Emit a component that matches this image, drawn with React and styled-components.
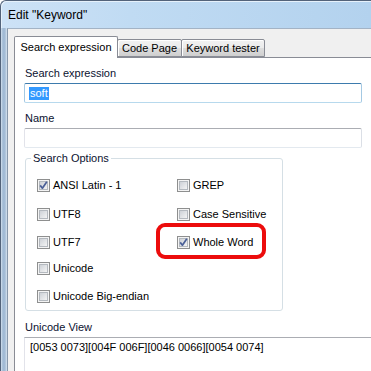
import React from "react";
import styled, { createGlobalStyle } from "styled-components";

const Global = createGlobalStyle`
  html, body { margin: 0; padding: 0; background: #fff; overflow: hidden; }
  body { font-family: "Liberation Sans", Arial, sans-serif; -webkit-font-smoothing: antialiased; }
`;

const Window = styled.div`
  width: 371px;
  height: 371px;
  display: flex;
  flex-direction: column;
  overflow: hidden;
  background: #fff;
`;

const TitleBar = styled.div`
  flex: none;
  height: 28px;
  box-sizing: border-box;
  border-top: 1px solid #53637a;
  border-left: 1px solid #53637a;
  border-top-left-radius: 6px;
  background: linear-gradient(to right, #cde2f6 0%, #c0dbf3 35%, #b3d2ee 100%);
  box-shadow: inset 1px 1px 0 #e6f1fb;
  display: flex;
  align-items: center;
  padding-left: 7px;
  font-size: 12px;
  color: #000;
`;

const Body = styled.div`
  flex: 1;
  display: flex;
  min-height: 0;
`;

const Frame = styled.div`
  flex: none;
  width: 7px;
  box-sizing: border-box;
  border-left: 1px solid #53637a;
  background: linear-gradient(
    to right,
    #dbe7f3 0px,
    #b0c6dc 1px,
    #9cb6d2 3px,
    #b8cce0 5px,
    #dde8f3 6px
  );
`;

const Client = styled.div`
  flex: 1;
  display: flex;
  flex-direction: column;
  background: #f0f0f0;
  border-left: 1px solid #8797aa;
  border-top: 1px solid #a3b3c5;
  padding: 7px 0 0 6px;
  min-width: 0;
`;

const TabStrip = styled.div`
  flex: none;
  height: 21px;
  display: flex;
  align-items: flex-end;
  position: relative;
  z-index: 1;
`;

const Tab = styled.div`
  box-sizing: border-box;
  width: ${(p) => p.$w}px;
  height: ${(p) => (p.$active ? 22 : 18)}px;
  margin-bottom: ${(p) => (p.$active ? -1 : 0)}px;
  margin-left: ${(p) => (p.$first ? 0 : -1)}px;
  border: 1px solid #898c95;
  border-bottom: ${(p) => (p.$active ? "none" : "1px solid #898c95")};
  border-radius: 2px 2px 0 0;
  background: ${(p) =>
    p.$active ? "#fff" : "linear-gradient(to bottom, #f2f2f2 0%, #ebebeb 50%, #dddddd 51%, #cfcfcf 100%)"};
  box-shadow: ${(p) => (p.$active ? "none" : "inset 1px 1px 0 #fff")};
  position: relative;
  z-index: ${(p) => (p.$active ? 2 : 1)};
  font-size: 11px;
  line-height: 13px;
  color: #000;
  display: flex;
  justify-content: center;
  padding-top: ${(p) => (p.$active ? 4 : 2)}px;
`;

const Panel = styled.div`
  flex: 1;
  background: #fff;
  border-top: 1px solid #898c95;
  border-left: 1px solid #898c95;
  padding: 9px 0 0 9px;
  display: flex;
  flex-direction: column;
  align-items: flex-start;
  min-width: 0;
`;

const Label = styled.div`
  font-size: 11px;
  line-height: 13px;
  color: #0b1230;
  padding-left: 1px;
  margin-top: ${(p) => p.$mt || 0}px;
`;

const TextBox = styled.div`
  box-sizing: border-box;
  width: 338px;
  height: 20px;
  margin-top: 3px;
  border: 1px solid;
  border-radius: 2px;
  border-color: ${(p) =>
    p.$focused ? "#3d7bad #a4c9e3 #b7d9ed #a4c9e3" : "#abadb3 #dbdfe6 #e3e9ef #e2e3ea"};
  background: #fff;
  padding: 3px 0 0 4px;
  font-size: 11px;
  line-height: 13px;
`;

const Selected = styled.span`
  background: #3399ff;
  color: #fff;
  padding: 0 1px;
  display: inline-block;
  height: 13px;
`;

const Group = styled.fieldset`
  margin: 4px 0 0 1px;
  width: 258px;
  box-sizing: border-box;
  border: 1px solid #d5dfe5;
  border-radius: 3px;
  padding: 14px 0 7px 11px;
  min-width: 0;
`;

const Legend = styled.legend`
  font-size: 11px;
  line-height: 13px;
  color: #0b1230;
  padding: 0 2px;
  margin-left: -6px;
`;

const OptionGrid = styled.div`
  display: grid;
  grid-template-columns: 140px auto;
  grid-template-rows: 29px 28px 26px 28px 13px;
  grid-auto-flow: column;
`;

const Option = styled.div`
  display: flex;
  align-items: flex-start;
  gap: 3px;
  height: 13px;
  font-size: 11px;
  line-height: 13px;
  color: #000;
  position: relative;
  white-space: nowrap;
  grid-row: ${(p) => p.$row || "auto"};
  grid-column: ${(p) => p.$col || "auto"};

  ${(p) =>
    p.$highlight &&
    `
    &::after {
      content: "";
      position: absolute;
      left: -21px;
      top: -13px;
      width: 110px;
      height: 36px;
      box-sizing: border-box;
      border: 4px solid #ec0c0c;
      border-radius: 9px;
    }
  `}
`;

const ViewBox = styled.div`
  box-sizing: border-box;
  align-self: stretch;
  flex: 1;
  margin-top: 3px;
  border-top: 1px solid #abadb3;
  border-left: 1px solid #e2e3ea;
  padding: 3px 0 0 5px;
  font-size: 11px;
  line-height: 13px;
  color: #000;
  white-space: nowrap;
`;

function CheckBox({ checked }) {
  return (
    <svg width="13" height="13" viewBox="0 0 13 13" style={{ flex: "none" }}>
      <defs>
        <linearGradient id="cbfill" x1="0" y1="0" x2="1" y2="1">
          <stop offset="0" stopColor="#cbcfd5" />
          <stop offset="1" stopColor="#f6f6f6" />
        </linearGradient>
      </defs>
      <rect x="0.5" y="0.5" width="12" height="12" fill="#f4f4f4" stroke="#8e8f8f" />
      <rect x="2.5" y="2.5" width="8" height="8" fill="url(#cbfill)" stroke="#b4b9bf" />
      {checked && (
        <path
          d="M3.2 6.4 L5.4 9.2 L9.8 2.8"
          stroke="#4a5f97"
          strokeWidth="1.7"
          fill="none"
          strokeLinejoin="round"
        />
      )}
    </svg>
  );
}

const left = [
  { label: "ANSI Latin - 1", checked: true },
  { label: "UTF8" },
  { label: "UTF7" },
  { label: "Unicode" },
  { label: "Unicode Big-endian" },
];
const right = [
  { label: "GREP" },
  { label: "Case Sensitive" },
  { label: "Whole Word", checked: true, highlight: true },
];

export default function App() {
  return (
    <>
      <Global />
      <Window>
        <TitleBar>Edit "Keyword"</TitleBar>
        <Body>
          <Frame />
          <Client>
            <TabStrip>
              <Tab $active $first $w={104}>Search expression</Tab>
              <Tab $w={65}>Code Page</Tab>
              <Tab $w={84}>Keyword tester</Tab>
            </TabStrip>
            <Panel>
              <Label>Search expression</Label>
              <TextBox $focused>
                <Selected>soft</Selected>
              </TextBox>
              <Label $mt={9}>Name</Label>
              <TextBox />
              <Group>
                <Legend>Search Options</Legend>
                <OptionGrid>
                  {left.map((o, i) => (
                    <Option key={o.label} $col={1} $row={i + 1}>
                      <CheckBox checked={o.checked} />
                      {o.label}
                    </Option>
                  ))}
                  {right.map((o, i) => (
                    <Option key={o.label} $col={2} $row={i + 1} $highlight={o.highlight}>
                      <CheckBox checked={o.checked} />
                      {o.label}
                    </Option>
                  ))}
                </OptionGrid>
              </Group>
              <Label $mt={10}>Unicode View</Label>
              <ViewBox>[0053 0073][004F 006F][0046 0066][0054 0074]</ViewBox>
            </Panel>
          </Client>
        </Body>
      </Window>
    </>
  );
}
